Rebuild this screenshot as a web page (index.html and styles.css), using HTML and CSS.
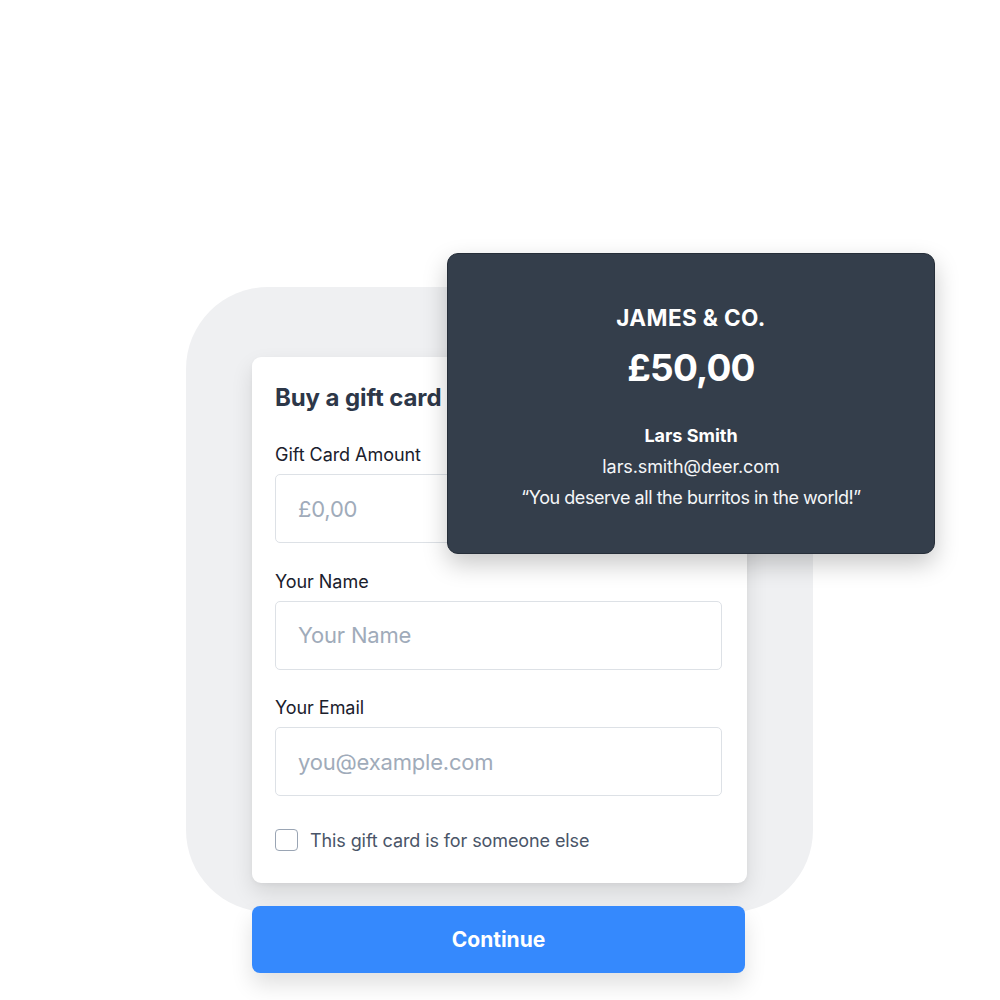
FILE: index.html
```html
<!DOCTYPE html>
<html lang="en">
<head>
<meta charset="utf-8">
<title>Buy a gift card</title>
<link rel="stylesheet" href="styles.css">
</head>
<body>
<div class="stage">
  <div class="backdrop">
    <div class="form-card">
      <h1 class="title">Buy a gift card</h1>
      <div class="label first">Gift Card Amount</div>
      <div class="field">£0,00</div>
      <div class="label">Your Name</div>
      <div class="field">Your Name</div>
      <div class="label">Your Email</div>
      <div class="field">you@example.com</div>
      <div class="check-row">
        <span class="check-box"></span>
        <span class="check-label">This gift card is for someone else</span>
      </div>
    </div>
  </div>
  <div class="btn">Continue</div>
  <div class="gift-card">
    <div class="brand">JAMES &amp; CO.</div>
    <div class="amount">£50,00</div>
    <div class="recipient">Lars Smith</div>
    <div class="line">lars.smith@deer.com</div>
    <div class="line quote">“You deserve all the burritos in the world!”</div>
  </div>
</div>
</body>
</html>
```
FILE: styles.css
```css
* { box-sizing: border-box; }
html, body {
  margin: 0;
  padding: 0;
  background: #ffffff;
  font-family: Inter, "Noto Sans", "Liberation Sans", sans-serif;
}
.stage {
  position: relative;
  width: 1000px;
  height: 1000px;
  padding: 287px 0 0 186px;
}
.backdrop {
  width: 627px;
  background: #eff0f2;
  border-radius: 82px;
  padding: 70px 66px 29px 66px;
}
.form-card {
  width: 495px;
  background: #ffffff;
  border-radius: 9px;
  padding: 26px 25px 31px 23px;
  box-shadow: 0 10px 22px rgba(0, 0, 0, 0.11), 0 2px 4px rgba(0, 0, 0, 0.04);
}
.title {
  margin: 0;
  font-size: 24px;
  line-height: 30px;
  font-weight: 700;
  color: #2d3748;
  letter-spacing: -0.1px;
}
.label {
  margin-top: 27.5px;
  font-size: 18px;
  line-height: 22px;
  color: #1a202c;
  letter-spacing: -0.05px;
}
.label.first { margin-top: 31px; }
.field {
  margin-top: 8px;
  height: 69px;
  border: 1.5px solid #dde1e6;
  border-radius: 5px;
  padding: 0 22px;
  display: flex;
  align-items: center;
  font-size: 22px;
  color: #a0abba;
  letter-spacing: -0.2px;
}
.check-row {
  margin-top: 32.5px;
  display: flex;
  align-items: center;
  gap: 12px;
  height: 23px;
}
.check-box {
  width: 23px;
  height: 22px;
  border: 1.5px solid #9aa5b4;
  border-radius: 4px;
  background: #fff;
}
.check-label {
  font-size: 18px;
  color: #4a5568;
  letter-spacing: -0.1px;
}
.btn {
  width: 493px;
  height: 67px;
  margin: -6px 0 0 66px;
  background: #3589fd;
  border-radius: 8px;
  color: #ffffff;
  font-size: 21px;
  font-weight: 700;
  display: flex;
  align-items: center;
  justify-content: center;
  position: relative;
  box-shadow: 0 12px 22px rgba(0, 0, 0, 0.12);
}
.gift-card {
  position: absolute;
  left: 447px;
  top: 253px;
  width: 488px;
  height: 301px;
  background: #343e4b;
  border: 1px solid #262e39;
  border-radius: 11px;
  box-shadow: 0 10px 24px rgba(0, 0, 0, 0.22);
  color: #ffffff;
  text-align: center;
  padding-top: 50px;
}
.brand {
  font-size: 22.5px;
  line-height: 28px;
  font-weight: 700;
  letter-spacing: 0.4px;
}
.amount {
  margin-top: 13px;
  font-size: 37px;
  line-height: 46px;
  font-weight: 700;
  letter-spacing: -0.8px;
}
.recipient {
  margin-top: 33px;
  font-size: 18px;
  line-height: 24px;
  font-weight: 700;
}
.line {
  margin-top: 7px;
  font-size: 18px;
  line-height: 24px;
  color: #f4f6f8;
  letter-spacing: -0.1px;
}
.line.quote {
  letter-spacing: -0.45px;
}
```
